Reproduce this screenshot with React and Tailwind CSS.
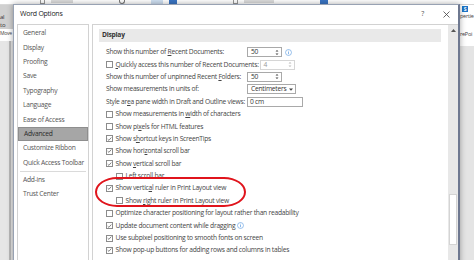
import React from 'react';

const navItems = [
  'General',
  'Display',
  'Proofing',
  'Save',
  'Typography',
  'Language',
  'Ease of Access',
  'Advanced',
  'Customize Ribbon',
  'Quick Access Toolbar',
];

const rows = [
  { kind: 'label', text: <>Show this number of <u>R</u>ecent Documents:</>, field: 'spin', value: '50', info: true },
  { kind: 'check', checked: false, text: <><u>Q</u>uickly access this number of Recent Documents:</>, field: 'spin', value: '4', disabled: true },
  { kind: 'label', text: <>Show this number of unpinned Recent <u>F</u>olders:</>, field: 'spin', value: '50' },
  { kind: 'label', text: <>Show measurements in units of:</>, field: 'select', value: 'Centimeters' },
  { kind: 'label', text: <>Style ar<u>e</u>a pane width in Draft and Outline views:</>, field: 'text', value: '0 cm' },
  { kind: 'check', checked: false, text: <>Show measurements in <u>w</u>idth of characters</> },
  { kind: 'check', checked: false, text: <>Show pi<u>x</u>els for HTML features</> },
  { kind: 'check', checked: true, text: <>Show s<u>h</u>ortcut keys in ScreenTips</> },
  { kind: 'check', checked: true, text: <>Show hori<u>z</u>ontal scroll bar</> },
  { kind: 'check', checked: true, text: <>Show <u>v</u>ertical scroll bar</> },
  { kind: 'check', checked: false, indent: true, text: 'Left scroll bar' },
  { kind: 'check', checked: true, text: <>Show vertic<u>a</u>l ruler in Print Layout view</> },
  { kind: 'check', checked: false, indent: true, text: <>Show <u>r</u>ight ruler in Print Layout view</> },
  { kind: 'check', checked: false, text: 'Optimize character positioning for layout rather than readability' },
  { kind: 'check', checked: true, text: 'Update document content while dragging', info: true },
  { kind: 'check', checked: true, text: 'Use subpixel positioning to smooth fonts on screen' },
  { kind: 'check', checked: true, text: 'Show pop-up buttons for adding rows and columns in tables' },
];

function Check({ checked }) {
  return (
    <span className="w-[7px] h-[7px] border border-[#8c8c8c] bg-white flex items-center justify-center shrink-0">
      {checked && (
        <svg width="6" height="6" viewBox="0 0 6 6">
          <path d="M0.8 3.2 L2.3 4.6 L5.2 1.2" fill="none" stroke="#444" strokeWidth="0.8" />
        </svg>
      )}
    </span>
  );
}

function Info() {
  return (
    <svg width="7" height="7" viewBox="0 0 8 8" className="shrink-0">
      <circle cx="4" cy="4" r="3.4" fill="none" stroke="#5b9be0" strokeWidth="0.7" />
      <rect x="3.6" y="3.3" width="0.8" height="2.6" fill="#5b9be0" />
      <rect x="3.6" y="2" width="0.8" height="0.8" fill="#5b9be0" />
    </svg>
  );
}

function Field({ row }) {
  if (row.field === 'spin') {
    return (
      <div className={`w-[35px] h-[10px] shrink-0 border flex items-center justify-between pl-[3px] pr-[2px] ${row.disabled ? 'border-[#d6d6d6] text-[#9a9a9a]' : 'border-[#a9a9a9] text-[#333]'}`}>
        <span>{row.value}</span>
        <svg width="4" height="7" viewBox="0 0 4 7">
          <path d="M0.5 2.6 L2 1 L3.5 2.6 Z M0.5 4.4 L2 6 L3.5 4.4 Z" fill={row.disabled ? '#bbb' : '#444'} />
        </svg>
      </div>
    );
  }
  if (row.field === 'select') {
    return (
      <div className="w-[49px] h-[10px] shrink-0 border border-[#a9a9a9] flex items-center justify-between pl-[3px] pr-[2px] text-[#333]">
        <span>{row.value}</span>
        <svg width="4" height="3" viewBox="0 0 4 3">
          <path d="M0 0.4 L4 0.4 L2 2.8 Z" fill="#444" />
        </svg>
      </div>
    );
  }
  return (
    <div className="w-[56px] h-[10px] shrink-0 border border-[#a9a9a9] flex items-center pl-[2px] text-[#333]">{row.value}</div>
  );
}

function Row({ row }) {
  if (row.kind === 'label') {
    return (
      <div className="h-[12.4px] flex items-center">
        <span className="w-[141px] shrink-0 whitespace-nowrap">{row.text}</span>
        <Field row={row} />
        {row.info && <span className="ml-[3px]"><Info /></span>}
      </div>
    );
  }
  return (
    <div className={`h-[12.4px] flex items-center ${row.indent ? 'pl-[10px]' : ''}`}>
      <Check checked={row.checked} />
      <span className={`ml-[2.5px] whitespace-nowrap ${row.field ? 'w-[144px] shrink-0' : ''}`}>{row.text}</span>
      {row.field && <Field row={row} />}
      {row.info && <span className="ml-[2px]"><Info /></span>}
    </div>
  );
}

export default function App() {
  return (
    <div className="relative w-[474px] h-[260px] overflow-hidden bg-[#e6e6e6] text-[6.7px] tracking-[-0.25px] text-[#454545] font-['Open_Sans','Noto_Sans',sans-serif]">
      {/* Word window behind the dialog */}
      <div className="flex flex-col h-full">
        <div className="h-[5px] bg-white flex items-start gap-[6px] pl-[40px] border-b border-[#d8d8d8]">
          <span className="w-[5px] h-[4px] border border-[#999] border-t-0" />
          <span className="w-[22px] h-[3px] bg-[#dcdcdc]" />
          <span className="ml-[40px] w-[6px] h-[4px] border border-[#777] border-t-0 rounded-b-[3px]" />
          <span className="ml-[20px] w-[12px] h-[4px] bg-[#cfe0f2]" />
          <span className="w-[8px] h-[4px] bg-[#3a75c4]" />
          <span className="ml-[50px] w-[5px] h-[4px] border border-[#999] border-t-0" />
          <span className="w-[30px] h-[3px] bg-[#dcdcdc]" />
          <span className="ml-[40px] w-[8px] h-[4px] bg-[#3a75c4]" />
        </div>
        <div className="flex flex-1 justify-between">
          <div className="w-[13px] flex flex-col">
            <div className="h-[24px] bg-[#d0d0d0] flex flex-col pt-[8px] text-[6px] leading-[8px] text-[#333]">
              <span>al</span>
              <span>to</span>
            </div>
            <div className="h-[12px] bg-white text-[5px] leading-[9px] text-[#444]">Move</div>
            <div className="flex-1 border-r-[2px] border-[#b8b8b8] mr-[2px]" />
          </div>
          <div className="w-[14px] flex flex-col bg-white text-[5.5px] text-[#444]">
            <div className="h-[7px] flex items-center pl-[2px]">
              <span className="w-[6px] h-[6px] bg-[#1c76c9] text-white text-[5px] leading-[6px] text-center font-bold">S</span>
            </div>
            <span className="leading-[8px]">pertie</span>
            <span className="mt-[10px] leading-[8px]">rePoi</span>
            <div className="flex-1 bg-[#e4e4e4] mt-[8px]" />
          </div>
        </div>
      </div>

      {/* Word Options dialog */}
      <div className="absolute left-[13px] top-[4px] w-[447px] h-[270px] bg-white border-t border-l border-[#98a2b3] border-r-2 border-r-[#6e7890] shadow-[0_0_6px_rgba(0,0,0,0.35)] flex flex-col">
        <div className="h-[19px] shrink-0 flex items-center pl-[6px] pr-[8px] text-[7px] text-[#222]">
          <span>Word Options</span>
          <span className="ml-auto text-[#555]">?</span>
          <svg width="7" height="7" viewBox="0 0 7 7" className="ml-[19px]">
            <path d="M0.5 0.5 L6.5 6.5 M6.5 0.5 L0.5 6.5" stroke="#444" strokeWidth="0.8" />
          </svg>
        </div>
        <div className="flex flex-1 pl-[3px] gap-[3px]">
          <div className="w-[72px] border border-[#d2d2d2] pt-[1px] text-[#555]">
            {navItems.map((item) => (
              <div
                key={item}
                className={`h-[14.4px] flex items-center whitespace-nowrap pl-[5px] ${item === 'Advanced' ? 'bg-[#a6a6a6] border border-[#8e8e8e] pl-[4px] text-[#2a2a2a]' : ''}`}
              >
                {item}
              </div>
            ))}
            <div className="h-px bg-[#dadada] mx-[2px] my-[1px]" />
            <div className="h-[14.4px] flex items-center pl-[5px]">Add-ins</div>
            <div className="h-[14.4px] flex items-center pl-[5px]">Trust Center</div>
          </div>
          <div className="flex-1 flex border-t border-l border-[#d2d2d2]">
            <div className="flex-1 flex flex-col">
              <div className="mt-[4px] ml-[6px] mr-[7px] h-[13px] bg-[#e9e9e9] flex items-center pl-[3px] font-bold text-[#333]">
                Display
              </div>
              <div className="mt-[4px] pl-[13px] flex flex-col">
                {rows.map((row, i) => (
                  <Row key={i} row={row} />
                ))}
              </div>
            </div>
            <div className="w-[10px] bg-[#e8e8e8] flex flex-col items-center">
              <div className="h-[8px] mt-[1px] flex items-center">
                <svg width="5" height="3" viewBox="0 0 5 3">
                  <path d="M0 3 L2.5 0 L5 3 Z" fill="#555" />
                </svg>
              </div>
              <div className="mt-[160px] w-[8px] h-[51px] bg-white border border-[#d4d4d4]" />
            </div>
          </div>
        </div>
      </div>

      {/* annotation */}
      <div className="absolute left-[95px] top-[177px] w-[151px] h-[30px] border-2 border-[#e0141c] rounded-[22px/15px]" />
    </div>
  );
}
